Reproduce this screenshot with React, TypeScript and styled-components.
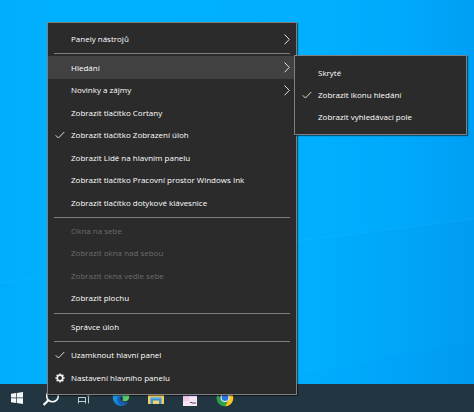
import React from "react";
import styled, { createGlobalStyle, css } from "styled-components";

const GlobalStyle = createGlobalStyle`
  * { box-sizing: border-box; }
  html, body, #root { height: 100%; }
  body {
    margin: 0;
    overflow: hidden;
    font-family: "Open Sans", "Noto Sans", sans-serif;
  }
`;

const Desktop = styled.main`
  position: relative;
  display: flex;
  flex-direction: column;
  height: 100%;
  min-height: 412px;
`;

const Wallpaper = styled.div`
  flex: 1;
  min-height: 0;
  background: linear-gradient(90deg, #00adfd 0%, #00b1ff 12%, #00b0ff 65%, #00a9fb 85%, #009ff4 100%);
`;

const Beams = styled.svg`
  display: block;
  width: 100%;
  height: 100%;
`;

const Taskbar = styled.nav`
  display: flex;
  height: 28px;
  flex: none;
  background: #213640;
`;

const TaskButtons = styled.div`
  display: flex;
  width: 242px;
`;

const TaskButton = styled.button`
  flex: 1;
  min-width: 0;
  display: flex;
  align-items: center;
  justify-content: center;
  padding: 0;
  border: 0;
  background: transparent;
`;

const panel = css`
  position: absolute;
  margin: 0;
  list-style: none;
  background: #2b2b2b;
  border: 1px solid #808080;
  box-shadow: 1px 1px 1px rgba(0, 0, 0, 0.5);
`;

const Menu = styled.ul`
  ${panel}
  display: flex;
  flex-direction: column;
  top: 22px;
  bottom: 17px;
  left: 47px;
  width: 250px;
  padding: 5px 0;
`;

const Submenu = styled.ul`
  ${panel}
  top: -1px;
  left: 246px;
  width: 173px;
  padding: 6px 0;
`;

const Entry = styled.li`
  position: relative;
  display: flex;
  flex: 1;
  min-height: 22px;
`;

const Item = styled.button<{ $active?: boolean }>`
  display: grid;
  grid-template-columns: 23px 1fr 12px;
  align-items: center;
  width: 100%;
  padding: 0;
  border: 0;
  background: ${(p) => (p.$active ? "#414141" : "transparent")};
  color: #ffffff;
  font: inherit;
  font-size: 8px;
  line-height: 12px;
  text-align: left;
  white-space: nowrap;

  &:disabled {
    color: #6b6b6b;
  }
`;

const Mark = styled.span`
  display: flex;
  justify-content: center;
  align-items: center;
`;

const Divider = styled.li`
  flex: none;
  height: 6px;
  padding: 3px 6px 2px;

  &::before {
    content: "";
    display: block;
    height: 1px;
    background: #7d7d7d;
  }
`;

const Icon = styled.svg`
  display: block;
  flex: none;
`;

const CheckIcon = () => (
  <Icon width="10" height="8" viewBox="0 0 10 8" fill="none" stroke="#dcdcdc" strokeWidth="1">
    <path d="M.7 4.3 3.4 7 9.3 1" />
  </Icon>
);

const ChevronIcon = () => (
  <Icon width="6" height="11" viewBox="0 0 6 11" fill="none" stroke="#e2e2e2" strokeWidth="1">
    <path d="M.5.5 5.3 5.4.5 10.3" />
  </Icon>
);

const GearIcon = () => (
  <Icon width="10" height="10" viewBox="0 0 10 10">
    <g stroke="#f4f4f4" fill="none">
      <circle cx="5" cy="5" r="2.8" strokeWidth="1.7" />
      <path
        strokeWidth="1.5"
        d="M5 .4v1.4M5 8.2v1.4M.4 5h1.4M8.2 5h1.4M1.7 1.7l1 1M7.3 7.3l1 1M1.7 8.3l1-1M7.3 2.7l1-1"
      />
    </g>
  </Icon>
);

const StartIcon = () => (
  <Icon width="12" height="12" viewBox="0 0 12 12" fill="#f5f8f9">
    <path d="M0 1.7 5 1v4.6H0zM5.7.9 12 0v5.6H5.7zM0 6.3h5V11l-5-.7zM5.7 6.3H12V12l-6.3-.9z" />
  </Icon>
);

const SearchIcon = () => (
  <Icon width="18" height="18" viewBox="0 0 18 18" fill="none" stroke="#f5f8f9">
    <circle cx="9.5" cy="7" r="5.8" strokeWidth="1.6" />
    <path d="M5.4 11.2.6 16" strokeWidth="2.2" />
  </Icon>
);

const TaskViewIcon = () => (
  <Icon width="20" height="16" viewBox="0 0 20 16" fill="none" stroke="#c3cbce">
    <path d="M2.5 2v2.5h7V2M2.5 13.4V7.5h7v5.9M2 11.5h8M12.5 2v1.5M12.5 7v6.4" />
    <path d="M11.5 5.5h2" strokeWidth="2" />
  </Icon>
);

const EdgeIcon = () => (
  <Icon width="18" height="18" viewBox="0 0 18 18">
    <defs>
      <linearGradient id="edgeGreen" x1="0" x2="1">
        <stop offset="0" stopColor="#24a9e2" />
        <stop offset="1" stopColor="#62d34b" />
      </linearGradient>
      <linearGradient id="edgeBlue" x1="0" x2="1" y2="1">
        <stop offset="0" stopColor="#1b9be6" />
        <stop offset="1" stopColor="#0f6cc4" />
      </linearGradient>
    </defs>
    <path fill="url(#edgeBlue)" d="M.8 8.3C.8 13.4 4.6 17 9 17c3 0 5.5-1.4 6.8-3.7-3 1.2-7.3.3-7.7-3.2-.1-1.3.4-2 1-2.7C7 4.8 2 5 .8 8.3z" />
    <path fill="url(#edgeGreen)" d="M.8 8.3C1 4 4.6.9 9 .9c4.5 0 8 3 8.2 6.8.1 2.8-1.8 4.6-4.2 4.6-1.8 0-2.9-.7-2.6-1.4.9-1 .7-2.5-.4-3.5C7.5 5.3 2.5 5.4.8 8.3z" />
    <path fill="#1a5bb0" d="M5.3 10c-.3 3.3 2.2 6 5.3 6.5 2.5-.2 4.3-1.4 5.2-3.2-3 1.2-7.3.3-7.7-3.2-.1-1.3.4-2 1-2.7-1.800-.4-3.600.8-3.800 2.600z" />
  </Icon>
);

const ExplorerIcon = () => (
  <Icon width="16" height="14" viewBox="0 0 16 14">
    <path fill="#e9ac2d" d="M0 1h6l1.5 1.5H16V13H0z" />
    <path fill="#f7cf63" d="M0 4h16v9H0z" />
    <path fill="#3a94d6" d="M2.5 13V6.5h11V13H11V9.5H5V13z" />
    <path fill="#77c3ef" d="M2.5 6.5h11v1h-11z" />
  </Icon>
);

const PictureIcon = () => (
  <Icon width="14" height="16" viewBox="0 0 14 16">
    <path fill="#5c56ad" d="M0 0h14v6H0z" />
    <path fill="#f7e4f4" d="M0 6h14v10H0z" />
    <path fill="#f2cdec" d="M0 6h6v5H0z" />
    <path stroke="#514c59" fill="none" d="M7 12.5h2M10 12v2M12 12v2" />
  </Icon>
);

const ChromeIcon = () => (
  <Icon width="18" height="18" viewBox="0 0 18 18">
    <path fill="#e34133" d="M9 9 1.7 4.9A8.3 8.3 0 0 1 16.2 4.9L9 5z" />
    <path fill="#2da14c" d="M1.7 4.9A8.3 8.3 0 0 0 9 17.3l3.5-6.2L9 9 5.4 11z" />
    <path fill="#fbc91d" d="M16.2 4.9A8.3 8.3 0 0 1 9 17.3l3.6-6.2L9 4.9z" />
    <circle cx="9" cy="8.5" r="4.6" fill="#fff" />
    <circle cx="9" cy="8.5" r="3.5" fill="#2877e3" />
  </Icon>
);

type EntryData = {
  label?: string;
  mark?: "check" | "gear";
  arrow?: boolean;
  disabled?: boolean;
  children?: EntryData[];
};

const entries: EntryData[] = [
  { label: "Panely nástrojů", arrow: true },
  {},
  {
    label: "Hledání",
    arrow: true,
    children: [
      { label: "Skryté" },
      { label: "Zobrazit ikonu hledání", mark: "check" },
      { label: "Zobrazit vyhledávací pole" },
    ],
  },
  { label: "Novinky a zájmy", arrow: true },
  { label: "Zobrazit tlačítko Cortany" },
  { label: "Zobrazit tlačítko Zobrazení úloh", mark: "check" },
  { label: "Zobrazit Lidé na hlavním panelu" },
  { label: "Zobrazit tlačítko Pracovní prostor Windows Ink" },
  { label: "Zobrazit tlačítko dotykové klávesnice" },
  {},
  { label: "Okna na sebe", disabled: true },
  { label: "Zobrazit okna nad sebou", disabled: true },
  { label: "Zobrazit okna vedle sebe", disabled: true },
  { label: "Zobrazit plochu" },
  {},
  { label: "Správce úloh" },
  {},
  { label: "Uzamknout hlavní panel", mark: "check" },
  { label: "Nastavení hlavního panelu", mark: "gear" },
];

const MenuEntry = ({ entry }: { entry: EntryData }) => {
  if (!entry.label) return <Divider role="separator" />;
  return (
    <Entry role="none">
      <Item
        type="button"
        role={entry.mark === "check" ? "menuitemcheckbox" : "menuitem"}
        aria-checked={entry.mark === "check" ? true : undefined}
        aria-haspopup={entry.arrow ? "menu" : undefined}
        disabled={entry.disabled}
        $active={Boolean(entry.children)}
      >
        <Mark>
          {entry.mark === "check" && <CheckIcon />}
          {entry.mark === "gear" && <GearIcon />}
        </Mark>
        <span>{entry.label}</span>
        {entry.arrow && <ChevronIcon />}
      </Item>
      {entry.children && (
        <Submenu role="menu" aria-label={entry.label}>
          {entry.children.map((child) => (
            <MenuEntry key={child.label} entry={child} />
          ))}
        </Submenu>
      )}
    </Entry>
  );
};

const tasks = [
  { name: "Start", Glyph: StartIcon },
  { name: "Hledat", Glyph: SearchIcon },
  { name: "Zobrazení úloh", Glyph: TaskViewIcon },
  { name: "Microsoft Edge", Glyph: EdgeIcon },
  { name: "Průzkumník souborů", Glyph: ExplorerIcon },
  { name: "Obrázky", Glyph: PictureIcon },
  { name: "Google Chrome", Glyph: ChromeIcon },
];

export default function App() {
  return (
    <>
      <GlobalStyle />
      <Desktop>
        <Wallpaper>
          <Beams viewBox="0 0 474 384" preserveAspectRatio="none" aria-hidden="true">
            <defs>
              <linearGradient id="lowerBeam" x1="0.6" x2="1">
                <stop offset="0" stopColor="#0098ee" stopOpacity="0" />
                <stop offset="1" stopColor="#0092ea" stopOpacity="0.25" />
              </linearGradient>
            </defs>
            <path fill="url(#lowerBeam)" d="M0 283 297 241 474 219V384H0z" />
            <path fill="#0090e8" fillOpacity="0.05" d="M297 376 474 340V384H297z" />
            <path fill="none" stroke="#35bcff" strokeOpacity="0.2" d="M0 283 297 241 474 219" />
          </Beams>
        </Wallpaper>
        <Taskbar aria-label="Hlavní panel">
          <TaskButtons>
            {tasks.map(({ name, Glyph }) => (
              <TaskButton key={name} type="button" aria-label={name}>
                <Glyph />
              </TaskButton>
            ))}
          </TaskButtons>
        </Taskbar>
        <Menu role="menu" aria-label="Nabídka hlavního panelu">
          {entries.map((entry, index) => (
            <MenuEntry key={index} entry={entry} />
          ))}
        </Menu>
      </Desktop>
    </>
  );
}
